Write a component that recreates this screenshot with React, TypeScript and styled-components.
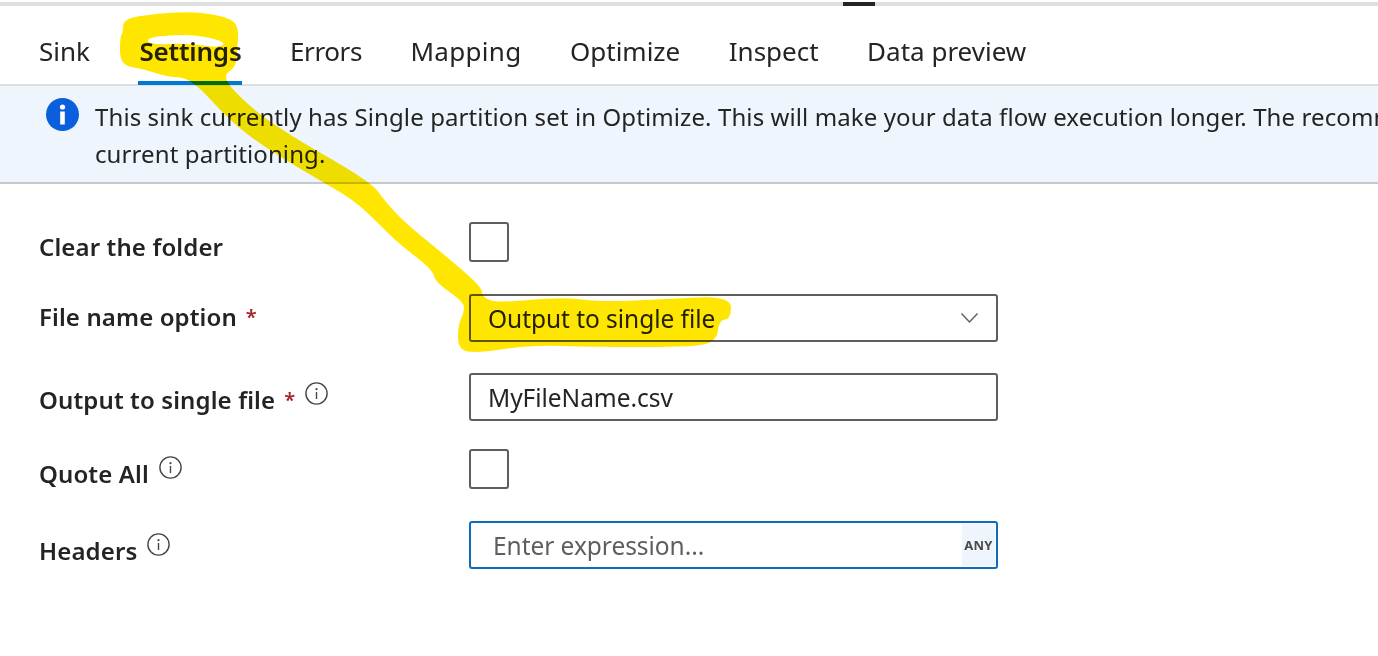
import { ReactElement } from "react";
import styled, { createGlobalStyle } from "styled-components";

const GlobalStyle = createGlobalStyle`
  html, body {
    margin: 0;
    padding: 0;
    height: 100%;
    background: #fff;
    overflow: hidden;
  }
`;

const Page = styled.div`
  position: relative;
  width: 1378px;
  height: 656px;
  overflow: hidden;
  background: #fff;
  color: #242424;
  font-family: "Noto Sans", "Open Sans", sans-serif;
`;

const TopBar = styled.div`
  display: flex;
  height: 4px;
  margin-top: 2px;
  padding-left: 843px;
  background: #e0e0e0;
`;

const TopBarMark = styled.div`
  width: 32px;
  background: #242424;
`;

const TabBar = styled.nav`
  display: flex;
  height: 78px;
  padding-left: 39px;
  gap: 48.5px;
  border-bottom: 2px solid #dedfe0;
`;

const Tab = styled.div<{ $active?: boolean; $spacing?: number }>`
  height: 79px;
  box-sizing: border-box;
  padding-top: 26px;
  padding-left: ${(p) => (p.$active ? "1px" : "0")};
  font-size: 26px;
  line-height: 38px;
  white-space: nowrap;
  font-weight: ${(p) => (p.$active ? 600 : 400)};
  letter-spacing: ${(p) => (p.$active ? -0.2 : p.$spacing ?? 0)}px;
  border-bottom: 4px solid ${(p) => (p.$active ? "#0078d4" : "transparent")};
`;

const Banner = styled.div`
  display: flex;
  height: 98px;
  padding: 12px 0 0 46px;
  box-sizing: border-box;
  gap: 16px;
  background: #eef5fc;
  border-bottom: 2px solid #c8c8c8;
  overflow: hidden;
`;

const BannerIcon = styled.svg`
  flex: none;
  width: 33px;
  height: 33px;
`;

const BannerText = styled.div`
  font-size: 24px;
  line-height: 37px;
  letter-spacing: 0.1px;
  white-space: nowrap;
`;

const Form = styled.div`
  display: flex;
  flex-direction: column;
  padding: 38px 0 0 39px;
`;

const Row = styled.div<{ $height: number }>`
  display: flex;
  align-items: flex-start;
  height: ${(p) => p.$height}px;
`;

const Label = styled.div<{ $top: number }>`
  display: flex;
  align-items: flex-start;
  width: 431px;
  margin-right: -1px;
  flex: none;
  padding-top: ${(p) => p.$top}px;
  font-size: 24px;
  line-height: 34px;
  font-weight: 600;
  letter-spacing: 0.12px;
`;

const Required = styled.span`
  margin-left: 9px;
  color: #a4262c;
  font-size: 20px;
`;

const HintIcon = styled.svg`
  flex: none;
  width: 23px;
  height: 23px;
  margin-left: 10px;
  margin-top: -1px;
`;

const CheckBox = styled.div`
  width: 40px;
  height: 40px;
  box-sizing: border-box;
  border: 2px solid #605e5c;
  border-radius: 3px;
`;

const Field = styled.div<{ $focused?: boolean }>`
  display: flex;
  align-items: center;
  justify-content: space-between;
  width: 529px;
  height: 48px;
  box-sizing: border-box;
  padding-left: ${(p) => (p.$focused ? "22px" : "17px")};
  border: 2px solid ${(p) => (p.$focused ? "#0f6cbd" : "#605e5c")};
  border-radius: 3px;
  font-size: 24.5px;
  letter-spacing: -0.05px;
  white-space: nowrap;
`;

const Placeholder = styled.span`
  color: #605e5c;
`;

const Chevron = styled.svg`
  width: 19px;
  height: 12px;
  margin-right: 17px;
`;

const TypeTag = styled.div`
  display: flex;
  align-items: center;
  justify-content: center;
  align-self: stretch;
  width: 33px;
  margin: 1px 1px 1px 0;
  background: #eef5fc;
  color: #4a4a4a;
  font-size: 13px;
  font-weight: 700;
  letter-spacing: 0.2px;
`;

const Highlight = styled.svg`
  position: absolute;
  top: 0;
  left: 0;
  mix-blend-mode: multiply;
  pointer-events: none;
`;

// marker scribble traced from the shot, outer outline then the hole in the loop
const outline: number[][] = [
  [123, 32], [123, 20], [143, 15], [193, 11], [232, 18], [239, 30], [237, 50], [236, 67], [221, 77],
  [250, 107], [286, 133], [371, 182], [384, 200], [404, 222], [441, 252], [482, 287], [482, 297],
  [498, 303], [560, 297], [604, 302], [666, 299], [731, 296], [731, 319], [719, 320], [717, 340],
  [698, 347], [592, 347], [531, 345], [478, 353], [458, 350], [458, 325], [464, 313], [464, 302],
  [435, 282], [433, 270], [398, 243], [380, 225], [354, 200], [314, 177], [264, 147], [229, 120],
  [191, 78], [168, 77], [143, 69], [120, 65], [120, 37],
];
const hole: number[][] = [[146, 37], [193, 34], [227, 42], [218, 48], [189, 43], [150, 45]];

function smooth(points: number[][]): string {
  const mid = (a: number[], b: number[]) => `${(a[0] + b[0]) / 2} ${(a[1] + b[1]) / 2}`;
  let d = `M${mid(points[points.length - 1], points[0])}`;
  points.forEach((p, i) => {
    d += ` Q${p[0]} ${p[1]} ${mid(p, points[(i + 1) % points.length])}`;
  });
  return d + " Z";
}

function Hint(): ReactElement {
  return (
    <HintIcon viewBox="0 0 23 23">
      <circle cx="11.5" cy="11.5" r="10.6" fill="none" stroke="#484644" strokeWidth="1.4" />
      <circle cx="11.5" cy="7.2" r="1.1" fill="#484644" />
      <rect x="10.8" y="10" width="1.4" height="7" fill="#484644" />
    </HintIcon>
  );
}

function App(): ReactElement {
  return (
    <Page>
      <GlobalStyle />
      <TopBar>
        <TopBarMark />
      </TopBar>
      <TabBar>
        <Tab>Sink</Tab>
        <Tab $active>Settings</Tab>
        <Tab $spacing={-0.4}>Errors</Tab>
        <Tab $spacing={0.3}>Mapping</Tab>
        <Tab>Optimize</Tab>
        <Tab>Inspect</Tab>
        <Tab>Data preview</Tab>
      </TabBar>
      <Banner>
        <BannerIcon viewBox="0 0 33 33">
          <circle cx="16.5" cy="16.5" r="16.5" fill="#0b5fdc" />
          <circle cx="16.5" cy="9" r="2.6" fill="#fff" />
          <rect x="14.2" y="13.5" width="4.6" height="13" fill="#fff" />
        </BannerIcon>
        <BannerText>
          This sink currently has Single partition set in Optimize. This will make your data flow execution longer. The recommended option is to use the
          <br />
          current partitioning.
        </BannerText>
      </Banner>
      <Form>
        <Row $height={72}>
          <Label $top={8}>Clear the folder</Label>
          <CheckBox />
        </Row>
        <Row $height={79}>
          <Label $top={6}>
            File name option<Required>*</Required>
          </Label>
          <Field>
            Output to single file
            <Chevron viewBox="0 0 19 12">
              <polyline points="1.5,1.5 9.5,10 17.5,1.5" fill="none" stroke="#605e5c" strokeWidth="1.4" />
            </Chevron>
          </Field>
        </Row>
        <Row $height={76}>
          <Label $top={10}>
            Output to single file<Required>*</Required>
            <Hint />
          </Label>
          <Field>MyFileName.csv</Field>
        </Row>
        <Row $height={72}>
          <Label $top={8}>
            Quote All
            <Hint />
          </Label>
          <CheckBox />
        </Row>
        <Row $height={48}>
          <Label $top={13}>
            Headers
            <Hint />
          </Label>
          <Field $focused>
            <Placeholder>Enter expression...</Placeholder>
            <TypeTag>ANY</TypeTag>
          </Field>
        </Row>
      </Form>
      <Highlight width="1378" height="656" viewBox="0 0 1378 656">
        <path d={`${smooth(outline)} ${smooth(hole)}`} fill="#ffe600" fillRule="evenodd" />
      </Highlight>
    </Page>
  );
}

export default App;
